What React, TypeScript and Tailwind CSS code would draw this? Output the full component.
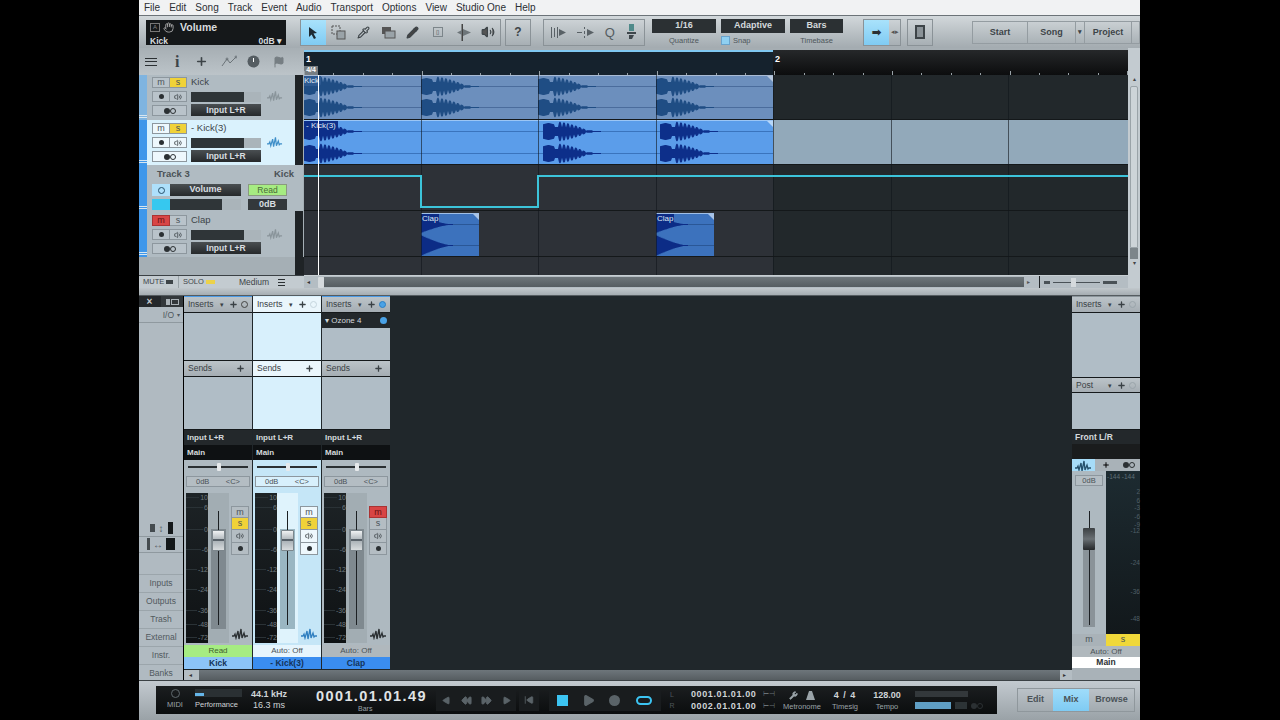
import React from "react";
import { Hand, Plus, Flag, Volume2, Wrench, Play, Rewind, FastForward, SkipBack, Pipette, Pencil } from "lucide-react";

// peaks for the kick hit: rounded attack, then a comb that dies away
const kickPath = (x0: number, cy: number, amp: number) => {
  const top: string[] = [];
  const bottom: string[] = [];
  for (let i = 0; i <= 58; i++) {
    let a = amp;
    if (i < 12) a = amp * (0.72 + 0.12 * Math.sin((i / 11) * Math.PI));
    else if (i < 15) a = amp * 0.45;
    else if (i < 46) {
      const env = Math.max(0.12, 1 - Math.pow((i - 15) / 32, 1.6));
      a = amp * env * [0.45, 0.9, 1, 0.9][(i - 15) % 4];
    } else a = i < 50 ? 1.2 : 0.5;
    top.push(`${x0 + i},${cy - a}`);
    bottom.unshift(`${x0 + i},${cy + a}`);
  }
  return "M" + top.join(" L") + " L" + bottom.join(" L") + "Z";
};

const clapPath = (cy: number, amp: number) => {
  const top: string[] = [];
  const bottom: string[] = [];
  for (let i = 0; i <= 32; i++) {
    const a = Math.max(0.5, amp * Math.pow(1 - i / 32, 1.5)) * (i % 2 ? 0.88 : 1);
    top.push(`${i},${cy - a}`);
    bottom.unshift(`${i},${cy + a}`);
  }
  return "M" + top.join(" L") + " L" + bottom.join(" L") + "Z";
};

const WaveIcon = ({ color = "#6f7a80" }: { color?: string }) => (
  <svg width="17" height="13" viewBox="0 0 17 13" fill="none" stroke={color} strokeWidth="1.3">
    <path d="M0 9h2l1-2 1 4 2-7 1 8 2-10 1 9 2-5 1 4 1-1h2" />
  </svg>
);

const SmallBtn = ({ children, className = "" }: { children?: React.ReactNode; className?: string }) => (
  <div className={`flex items-center justify-center border border-[#8d979e] text-[9px] leading-none text-[#4a5257] ${className}`}>
    {children}
  </div>
);

const Dot = () => <div className="h-[5px] w-[5px] rounded-full bg-[#2b3033]" />;

const Toggle = () => (
  <div className="flex items-center">
    <div className="h-[6px] w-[6px] rounded-full bg-[#2b3033]" />
    <div className="h-[6px] w-[6px] rounded-full border border-[#2b3033]" />
  </div>
);

const Tri = () => <span className="mx-[2px] text-[7px] leading-none">▾</span>;

const TrackRow = ({ name, selected, mute, rowClass, stripClass, padClass }: {
  name: string; selected?: boolean; mute?: boolean; rowClass: string; stripClass: string; padClass: string;
}) => {
  const btn = selected ? "bg-[#eef8fd]" : "bg-[#b9c3ca]";
  return (
    <div className={`flex ${rowClass}`}>
      <div className={`flex w-[8px] items-end ${stripClass}`}>
        <span className="mb-[2px] h-[3px] w-full border-y border-[#d8e6f0]" />
      </div>
      <div className={`flex w-[148px] gap-[4px] pl-[5px] ${padClass} ${selected ? "bg-[#daf2fd]" : "bg-[#b0bbc2]"}`}>
        <div className="flex w-[35px] flex-col gap-[3px]">
          <div className="flex h-[11px]">
            <SmallBtn className={`w-[18px] ${mute ? "border-[#a33] bg-[#d84545] text-[#611]" : btn}`}>m</SmallBtn>
            <SmallBtn className={`w-[17px] border-l-0 ${selected || name === "Kick" ? "bg-[#f0d238]" : btn}`}>s</SmallBtn>
          </div>
          <div className="flex h-[11px]">
            <SmallBtn className={`w-[18px] ${btn}`}><Dot /></SmallBtn>
            <SmallBtn className={`w-[17px] border-l-0 ${btn}`}><Volume2 size={8} strokeWidth={2.5} /></SmallBtn>
          </div>
          <SmallBtn className={`h-[11px] w-[35px] ${btn}`}><Toggle /></SmallBtn>
        </div>
        <div className="flex w-[70px] flex-col">
          <div className="h-[15px] text-[9.5px] leading-[9px] text-[#3d4448]">{name}</div>
          <div className="flex h-[10px]">
            <div className="w-[53px] bg-[#2f3538]" />
            <div className="w-[17px] bg-[#aab4ba]" />
          </div>
          <div className="mt-[2px] flex h-[12px] items-center justify-center bg-linear-to-b from-[#4a4f52] to-[#26292b] text-[8.5px] font-bold text-[#d9dee1]">
            Input L+R
          </div>
        </div>
        <div className="flex w-[18px] items-center pb-[6px] pl-[2px]">
          <WaveIcon color={selected ? "#3f8fc9" : "#8a959b"} />
        </div>
      </div>
      <div className="w-[8px] bg-[#1f2326]" />
    </div>
  );
};

const AutomationRow = () => (
  <div className="flex h-[46px]">
    <div className="flex w-[8px] items-end bg-[#3f97ea]">
      <span className="mb-[2px] h-[3px] w-full border-y border-[#d8e6f0]" />
    </div>
    <div className="flex w-[156px] flex-col bg-[#b0bbc2] pl-[5px] pr-[9px] pt-[3px]">
      <div className="flex h-[13px] items-center justify-between pl-[5px] text-[9.5px] font-bold text-[#4a5257]">
        <span>Track 3</span>
        <span>Kick</span>
      </div>
      <div className="mt-[3px] flex h-[12px]">
        <div className="flex w-[18px] items-center justify-center bg-[#aee0fb] text-[8px]">
          <div className="h-[7px] w-[7px] rounded-full border border-[#25506b]" />
        </div>
        <div className="flex w-[71px] items-center justify-center bg-linear-to-b from-[#4a4f52] to-[#26292b] text-[9px] font-bold text-[#d9dee1]">Volume</div>
        <div className="ml-[7px] flex w-[39px] items-center justify-center border border-[#8a9a80] bg-[#a6ec82] text-[8.5px] text-[#4a6b38]">Read</div>
      </div>
      <div className="mt-[3px] flex h-[11px]">
        <div className="w-[18px] bg-[#36c8ef]" />
        <div className="w-[52px] bg-[#2f3538]" />
        <div className="w-[19px] bg-[#aab4ba]" />
        <div className="ml-[7px] flex w-[39px] items-center justify-center bg-[#33383b] text-[9px] font-bold text-[#d9dee1]">0dB</div>
      </div>
    </div>
  </div>
);

const RULER_TICKS = Array.from({ length: 29 }, (_, i) => i * 29.4);
const GRID = [117, 234, 352, 469, 587, 704];

const Corner = ({ fill }: { fill: string }) => (
  <svg className="absolute right-0 top-0" width="6" height="6" fill={fill}><path d="M0 0h6v6z" /></svg>
);

const Timeline = () => (
  <div className="relative h-[200px] w-[824px] overflow-hidden bg-[#22282b]">
    {/* kick */}
    <div className="flex h-[45px] border-b border-[#14181a]">
      <div className="relative h-[44px] w-[469px] border-t border-[#a9bbd4] bg-[#6c8fbd]">
        <div className="absolute left-0 top-[10px] h-px w-full bg-[#4a6c9c]" />
        <div className="absolute left-0 top-[31px] h-px w-full bg-[#4a6c9c]" />
        <svg className="absolute left-0 top-0" width="469" height="44" fill="#1f4d84">
          {[0, 117, 234, 352].map((x) => (
            <g key={x}>
              <path d={kickPath(x, 10.5, 10)} />
              <path d={kickPath(x, 31.5, 10)} />
            </g>
          ))}
        </svg>
        <Corner fill="#b6c8de" />
        <div className="absolute left-0 top-0 rounded-br-[3px] bg-[#2e5a92] pr-[2px] text-[8px] leading-[10px] text-[#dfe8f2]">Kick</div>
      </div>
    </div>
    {/* kick(3), selected */}
    <div className="flex h-[45px] border-b border-[#14181a]">
      <div className="relative h-[44px] w-[469px] border-t border-[#9cc6f5] bg-[#5b9dea]">
        <div className="absolute left-0 top-[10px] h-px w-full bg-[#3a74bd]" />
        <div className="absolute left-0 top-[32px] h-px w-full bg-[#3a74bd]" />
        <svg className="absolute left-0 top-0" width="469" height="44" fill="#0d2f8a">
          {[0, 239, 356].map((x) => (
            <g key={x}>
              <path d={kickPath(x, 10.5, 10)} />
              <path d={kickPath(x, 32.5, 10)} />
            </g>
          ))}
        </svg>
        <Corner fill="#b8d8fa" />
        <div className="absolute left-0 top-0 rounded-br-[3px] bg-[#0d2f8a] px-[2px] text-[8px] leading-[10px] text-[#dfe8f2]">- Kick(3)</div>
      </div>
      <div className="h-[44px] flex-1 bg-[#92a9ba]" />
    </div>
    {/* automation */}
    <div className="flex h-[46px] border-b border-[#14181a]">
      <div className="h-[45px] w-[469px] bg-[#2d3137]" />
      <div className="h-[45px] flex-1 bg-[#22282b]" />
    </div>
    {/* clap */}
    <div className="relative flex h-[46px] border-b border-[#14181a]">
      <div className="h-[45px] w-[469px] bg-[#2d3137]" />
      <div className="h-[45px] flex-1 bg-[#22282b]" />
      {[117, 352].map((x) => (
        <div key={x} className={`absolute top-[2px] h-[43px] w-[58px] border-t border-[#a0c0e8] bg-[#3c72bd] ${x === 117 ? "left-[117px]" : "left-[352px]"}`}>
          <div className="absolute left-0 top-[10px] h-px w-full bg-[#2a5797]" />
          <div className="absolute left-0 top-[31px] h-px w-full bg-[#2a5797]" />
          <svg className="absolute left-0 top-0" width="58" height="43" fill="#0c2c86">
            <path d={clapPath(10.5, 9)} />
            <path d={clapPath(31.5, 11)} />
          </svg>
          <Corner fill="#a9c4e8" />
          <div className="absolute left-0 top-0 rounded-br-[3px] bg-[#0c2c86] px-[1px] text-[8px] leading-[10px] text-[#dfe8f2]">Clap</div>
        </div>
      ))}
    </div>
    <div className="flex h-[18px]">
      <div className="w-[469px] bg-[#2d3137]" />
      <div className="flex-1 bg-[#22282b]" />
    </div>
    {/* grid lines and playhead sit over the lanes */}
    {GRID.map((x) => (
      <div key={x} className="absolute top-0 h-full w-px bg-[#11161a] opacity-60" style={{ left: x }} />
    ))}
    <svg className="absolute left-0 top-0" width="824" height="200" fill="none" stroke="#3cc4da" strokeWidth="2">
      <path d="M0 101H117V132H234V101H824" />
    </svg>
    <div className="absolute left-[14px] top-0 h-full w-px bg-white" />
  </div>
);

const Ruler = () => (
  <div className="relative h-[27px] w-[824px] bg-[#a5adb2] pt-[2px]">
    <div className="flex h-[25px]">
      <div className="h-full w-[469px] border-t-2 border-[#7fc8f2] bg-[#15222d]" />
      <div className="h-full flex-1 bg-linear-to-b from-[#26282a] to-[#0c0d0e]" />
    </div>
    <span className="absolute left-[2px] top-[5px] text-[9px] font-bold text-white">1</span>
    <span className="absolute left-[471px] top-[5px] text-[9px] font-bold text-white">2</span>
    <span className="absolute bottom-0 left-0 flex h-[9px] w-[14px] items-center justify-center bg-[#777e83] text-[7px] font-bold text-white">4/4</span>
    {RULER_TICKS.map((x, i) => (
      <div key={i} className="absolute bottom-0 w-px bg-[#9aa3a8]" style={{ left: x, height: i % 4 === 0 ? 4 : 2 }} />
    ))}
  </div>
);

const Meter = () => {
  const marks = ["10", "6", "0", "-6", "-12", "-24", "-36", "-48", "-72"];
  const pos = ["top-0", "top-[10px]", "top-[32px]", "top-[52px]", "top-[72px]", "top-[92px]", "top-[113px]", "top-[127px]", "top-[140px]"];
  return (
    <div className="relative h-[150px] w-[22px] bg-linear-to-b from-[#1d2326] to-[#0f1214]">
      {marks.map((m, i) => (
        <span key={m} className={`absolute right-0 flex w-full items-center justify-end text-[7px] leading-[9px] text-[#6e797f] ${pos[i]}`}>
          <span className="mr-[1px] h-px flex-1 bg-[#2a3236]" />
          {m}
        </span>
      ))}
    </div>
  );
};

const FaderCap = () => (
  <div className="absolute left-[4px] top-[37px] h-[21px] w-[13px] rounded-[1px] border border-[#7c868c] bg-linear-to-b from-[#f0f2f3] via-[#a9b1b6] to-[#d8dcde]">
    <div className="mt-[8px] h-[2px] w-full bg-[#59626a]" />
  </div>
);

const Channel = ({ name, selected, mute, solo, mode, ozone }: {
  name: string; selected?: boolean; mute?: boolean; solo?: boolean; mode: string; ozone?: boolean;
}) => {
  const area = selected ? "bg-[#d8f0fc]" : "bg-[#b0bdc6]";
  const head = selected ? "bg-[#eaf6fc]" : "bg-linear-to-b from-[#bcc4c9] to-[#a5adb3]";
  const small = selected ? "bg-[#eef8fd]" : "bg-[#b4bdc3]";
  return (
    <div className="flex w-[68px] flex-col">
      <div className={`h-px ${selected ? "bg-[#d8f0fc]" : "bg-[#4c9be6]"}`} />
      <div className={`flex h-[15px] items-center gap-[3px] pl-[4px] text-[8.5px] text-[#3a4145] ${head}`}>
        <span className="w-[27px]">Inserts</span>
        <Tri />
        <Plus size={9} strokeWidth={3.5} />
        <div className={`h-[7px] w-[7px] rounded-full border ${ozone ? "border-[#2a7fc4] bg-[#4aa2e6]" : selected ? "border-[#c5d5dd]" : "border-[#444]"}`} />
      </div>
      <div className="h-px bg-[#15191b]" />
      <div className={`h-[47px] ${area}`}>
        {ozone && (
          <div className="flex h-[15px] items-center justify-between bg-[#23282b] pl-[3px] pr-[3px] text-[8px] text-[#d5dadd]">
            <span>▾ Ozone 4</span>
            <div className="h-[7px] w-[7px] rounded-full bg-[#4aa2e6]" />
          </div>
        )}
      </div>
      <div className="h-px bg-[#15191b]" />
      <div className={`flex h-[15px] items-center justify-between pl-[4px] pr-[7px] text-[8.5px] text-[#3a4145] ${head}`}>
        <span>Sends</span>
        <Plus size={9} strokeWidth={3.5} />
      </div>
      <div className="h-px bg-[#15191b]" />
      <div className={`h-[52px] ${area}`} />
      <div className="h-px bg-[#15191b]" />
      <div className="flex h-[15px] items-center bg-[#23282b] pl-[3px] text-[8px] font-bold text-[#d5dadd]">Input L+R</div>
      <div className="flex h-[15px] items-center bg-[#0e1113] pl-[3px] text-[8px] font-bold text-[#d5dadd]">Main</div>
      <div className={`flex h-[185px] flex-col px-[2px] ${selected ? "bg-[#c5e6f7]" : "bg-[#aeb9c0]"}`}>
        <div className="relative mx-[2px] mt-[6px] h-[2px] bg-[#2a2f32]">
          <div className="absolute left-[29px] top-[-3px] h-[8px] w-[4px] rounded-[1px] bg-[#e6e9eb]" />
        </div>
        <div className={`mt-[8px] flex h-[11px] items-center justify-between border border-[#8d979e] px-[9px] text-[7.5px] text-[#4a5257] ${selected ? "bg-[#d8f0fc]" : "bg-[#b4bdc3]"}`}>
          <span>0dB</span><span>&lt;C&gt;</span>
        </div>
        <div className="mt-[6px] flex h-[150px]">
          <Meter />
          <div className={`relative h-[150px] w-[21px] ${selected ? "bg-[#dff3fc]" : "bg-[#a2adb3]"}`}>
            <div className={`absolute left-[3px] top-[36px] h-[100px] w-[15px] ${selected ? "bg-[#9ab6c2]" : "bg-[#7f898f]"}`} />
            <div className="absolute left-[10px] top-[18px] h-[114px] w-px bg-[#1c2023]" />
            <FaderCap />
          </div>
          <div className="ml-[2px] flex w-[18px] flex-col">
            <SmallBtn className={`mt-[13px] h-[12px] ${mute ? "border-[#a33] bg-[#d84545] text-[#611]" : small}`}>m</SmallBtn>
            <SmallBtn className={`h-[12px] border-t-0 ${solo ? "bg-[#f0d238]" : small}`}>s</SmallBtn>
            <SmallBtn className={`h-[13px] border-t-0 ${small}`}><Volume2 size={8} strokeWidth={2.5} /></SmallBtn>
            <SmallBtn className={`h-[12px] border-t-0 ${small}`}><Dot /></SmallBtn>
            <div className="mt-auto mb-[3px] flex justify-center"><WaveIcon color={selected ? "#2f7fc0" : "#2b3033"} /></div>
          </div>
        </div>
      </div>
      <div className={`flex h-[12px] items-center justify-center text-[8px] ${mode === "Read" ? "bg-[#a6ec82] text-[#41612e]" : selected ? "bg-[#e6f5fd] text-[#4a5257]" : "bg-[#b0b8bd] text-[#4a5257]"}`}>{mode}</div>
      <div className={`flex h-[12px] items-center justify-center text-[8.5px] font-bold text-[#14345a] ${name === "Kick" ? "bg-[#8cc4f7]" : "bg-[#3a8df0]"}`}>{name}</div>
    </div>
  );
};

const MainChannel = () => (
  <div className="flex w-[68px] flex-col">
    <div className="h-px bg-[#8b959b]" />
    <div className="flex h-[15px] items-center gap-[3px] bg-linear-to-b from-[#bcc4c9] to-[#a5adb3] pl-[4px] text-[8.5px] text-[#3a4145]">
      <span className="w-[27px]">Inserts</span>
      <Tri />
      <Plus size={9} strokeWidth={3.5} />
      <div className="h-[7px] w-[7px] rounded-full border border-[#9aa4aa]" />
    </div>
    <div className="h-[65px] border-t border-[#15191b] bg-[#b0bdc6]" />
    <div className="flex h-[15px] items-center gap-[3px] border-t border-[#15191b] bg-linear-to-b from-[#bcc4c9] to-[#a5adb3] pl-[4px] text-[8.5px] text-[#3a4145]">
      <span className="w-[27px]">Post</span>
      <Tri />
      <Plus size={9} strokeWidth={3.5} />
      <div className="h-[7px] w-[7px] rounded-full border border-[#9aa4aa]" />
    </div>
    <div className="h-[37px] border-t border-[#15191b] bg-[#b0bdc6]" />
    <div className="flex h-[15px] items-center border-t border-[#15191b] bg-[#23282b] pl-[3px] text-[8.5px] font-bold text-[#d5dadd]">Front L/R</div>
    <div className="h-[15px] bg-[#1a1c1d]" />
    <div className="flex h-[12px] items-center">
      <div className="flex h-full w-[23px] items-center justify-center bg-[#a6dcf8]"><WaveIcon color="#25506b" /></div>
      <div className="flex h-full w-[22px] items-center justify-center bg-[#a9b2b8]"><Plus size={8} strokeWidth={3} /></div>
      <div className="flex h-full w-[23px] items-center justify-center bg-[#a9b2b8]"><Toggle /></div>
    </div>
    <div className="flex h-[163px]">
      <div className="relative h-full w-[34px] bg-[#aeb9c0]">
        <div className="mx-[3px] mt-[4px] flex h-[11px] items-center justify-center border border-[#8d979e] bg-[#b4bdc3] text-[7.5px] text-[#4a5257]">0dB</div>
        <div className="absolute left-[11px] top-[58px] h-[98px] w-[12px] bg-[#8a9399]" />
        <div className="absolute left-[17px] top-[40px] h-[114px] w-px bg-[#1c2023]" />
        <div className="absolute left-[11px] top-[57px] h-[22px] w-[12px] rounded-[1px] bg-linear-to-b from-[#3c4043] via-[#6a7074] to-[#25282a]" />
      </div>
      <div className="relative h-full w-[34px] bg-linear-to-b from-[#1d2b31] to-[#12181b]">
        <div className="pl-[1px] pt-[2px] text-[6.5px] leading-[8px] text-[#5f7078]">-144 -144</div>
        {[["2", "top-[17px]"], ["6", "top-[26px]"], ["-3", "top-[33px]"], ["-6", "top-[42px]"], ["-9", "top-[50px]"], ["-12", "top-[56px]"], ["-24", "top-[88px]"], ["-36", "top-[117px]"], ["-48", "top-[144px]"]].map(([m, t]) => (
          <span key={m} className={`absolute right-0 text-[6.5px] leading-[8px] text-[#4f5f66] ${t}`}>{m}</span>
        ))}
      </div>
    </div>
    <div className="flex h-[12px]">
      <div className="flex w-[34px] items-center justify-center bg-[#a9b2b8] text-[9px] text-[#4a5257]">m</div>
      <div className="flex w-[34px] items-center justify-center bg-[#f0d83a] text-[9px] text-[#4a5257]">s</div>
    </div>
    <div className="flex h-[11px] items-center justify-center bg-[#b0b8bd] text-[8px] text-[#4a5257]">Auto: Off</div>
    <div className="flex h-[11px] items-center justify-center bg-white text-[8.5px] font-bold text-[#2b3033]">Main</div>
    <div className="flex-1 bg-[#a9b2b8]" />
  </div>
);

const ConsoleSide = () => (
  <div className="flex w-[44px] flex-col bg-[#b0bac1] text-[8.5px] text-[#50595e]">
    <div className="flex h-[11px] bg-[#24282b]">
      <div className="flex w-[21px] items-center justify-center text-[10px] font-bold text-[#c7ccd0]">×</div>
      <div className="ml-[1px] flex flex-1 items-center justify-center gap-[1px] bg-[#33383b]">
        <span className="h-[6px] w-[4px] bg-[#aab2b7]" />
        <span className="h-[6px] w-[8px] border border-[#aab2b7]" />
      </div>
    </div>
    <div className="flex h-[16px] items-center justify-end gap-[3px] border-b border-[#8f999f] pr-[3px] pt-[2px]">
      <span>I/O</span>
      <span className="text-[6px]">▾</span>
    </div>
    <div className="mt-[198px] flex h-[17px] items-center justify-center gap-[4px] border-b border-[#8f999f] text-[10px]">
      <div className="h-[8px] w-[5px] bg-[#444b4f]" />
      <span>↕</span>
      <div className="h-[12px] w-[5px] bg-[#14181a]" />
    </div>
    <div className="flex h-[19px] items-center justify-center gap-[3px] border-b border-[#8f999f] text-[10px]">
      <div className="h-[12px] w-[3px] bg-[#444b4f]" />
      <span>↔</span>
      <div className="h-[12px] w-[9px] bg-[#14181a]" />
    </div>
    <div className="mt-[21px] flex flex-col">
      {["Inputs", "Outputs", "Trash", "External", "Instr.", "Banks"].map((t) => (
        <div key={t} className="flex h-[18px] items-center justify-center border-t border-[#9ba5ab]">{t}</div>
      ))}
    </div>
  </div>
);

const TBtn = ({ children, className = "" }: { children?: React.ReactNode; className?: string }) => (
  <div className={`flex h-[22px] w-[20px] items-center justify-center bg-[#191c1e] text-[#5a6368] ${className}`}>{children}</div>
);

const ToolBtn = ({ children, active }: { children?: React.ReactNode; active?: boolean }) => (
  <div className={`flex h-[25px] w-[25px] items-center justify-center text-[#3d4448] ${active ? "bg-linear-to-b from-[#a9e2fb] to-[#7fcbf3]" : ""}`}>{children}</div>
);

export default function App() {
  return (
    <div className="h-[720px] w-[1280px] overflow-hidden bg-black pl-[139px] [font-family:'Liberation_Sans',sans-serif]">
      <div className="flex h-[720px] w-[1001px] flex-col">
        {/* menu */}
        <div className="flex h-[15px] items-center gap-[9px] bg-[#f1f2f3] pl-[5px] text-[10px] text-[#2b2f33]">
          {["File", "Edit", "Song", "Track", "Event", "Audio", "Transport", "Options", "View", "Studio One", "Help"].map((m) => (
            <span key={m}>{m}</span>
          ))}
        </div>

        {/* toolbar */}
        <div className="flex h-[33px] items-center border-t border-[#6c7378] bg-linear-to-b from-[#d2d8db] to-[#a3abb0] pl-[7px]">
          <div className="flex h-[25px] w-[140px] flex-col justify-between bg-[#15181a] px-[4px] py-[1px] text-white">
            <div className="flex h-[14px] items-center gap-[3px]">
              <div className="flex h-[9px] w-[10px] items-center justify-center border border-[#777] text-[6px] text-[#888]">A</div>
              <Hand size={11} className="text-[#aaa]" />
              <span className="ml-[3px] text-[10.5px] font-bold text-[#d8dcde]">Volume</span>
            </div>
            <div className="flex items-center justify-between text-[8.5px] font-bold text-[#d8dcde]">
              <span>Kick</span>
              <span>0dB ▾</span>
            </div>
          </div>
          <div className="ml-[14px] flex h-[27px] w-[201px] items-center border border-[#8a9297]">
            <ToolBtn active>
              <svg width="12" height="13" viewBox="0 0 12 13" fill="#1e2a32"><path d="M2 1l8 6-3.5.6L9 12l-2 1-2.4-4.6L2 11z" /></svg>
            </ToolBtn>
            <ToolBtn>
              <svg width="15" height="15" viewBox="0 0 15 15" fill="none" stroke="#555"><rect x="1" y="1" width="8" height="8" strokeDasharray="2 1" /><rect x="6" y="6" width="8" height="8" fill="#9aa3a8" /></svg>
            </ToolBtn>
            <ToolBtn><Pipette size={13} /></ToolBtn>
            <ToolBtn>
              <svg width="15" height="13" viewBox="0 0 15 13" fill="#555"><rect x="1" y="1" width="9" height="7" /><rect x="4" y="5" width="10" height="7" fill="#9aa3a8" stroke="#555" /></svg>
            </ToolBtn>
            <ToolBtn><Pencil size={13} fill="#444" /></ToolBtn>
            <ToolBtn>
              <div className="flex h-[10px] w-[10px] items-center justify-center border border-[#7c858a] text-[6px]">▯</div>
            </ToolBtn>
            <ToolBtn>
              <svg width="17" height="17" viewBox="0 0 17 17" fill="#6d7579"><rect x="7.5" y="0" width="1.5" height="17" fill="#444" /><path d="M9 5l8 3.500-8 3.500zM8 6L3 8.500l5 2.500z" /></svg>
            </ToolBtn>
            <ToolBtn><Volume2 size={14} fill="#555" /></ToolBtn>
          </div>
          <div className="ml-[4px] flex h-[27px] w-[26px] items-center justify-center border border-[#8a9297] text-[12px] font-bold text-[#3d4448]">?</div>
          <div className="ml-[12px] flex h-[27px] w-[102px] items-center justify-around border border-[#8a9297] px-[2px] text-[#555d62]">
            <svg width="15" height="11" viewBox="0 0 15 11" fill="#596166"><path d="M0 0h1v11H0zM3 1h1v9H3zM6 0h1v11H6zM8 2l7 3.500-7 3.500z" /></svg>
            <svg width="17" height="11" viewBox="0 0 17 11" fill="#596166"><path d="M0 5h5v1H0zM7 0h1v2H7zM7 4h1v3H7zM7 9h1v2H7zM10 2l7 3.500-7 3.500z" /></svg>
            <span className="text-[13px] leading-none">Q</span>
            <svg width="11" height="16" viewBox="0 0 11 16" fill="#3f474c"><rect x="3" y="0" width="5" height="7" fill="#4f8a8a" /><path d="M1 8h9v2H1zM3 11h5l-2 4H3z" /></svg>
          </div>
          <div className="ml-[7px] flex w-[200px] flex-col pt-[1px]">
            <div className="flex gap-[5px]">
              <div className="flex h-[14px] w-[64px] items-center justify-center bg-[#2b3033] text-[9px] font-bold text-[#d5dadd]">1/16</div>
              <div className="flex h-[14px] w-[64px] items-center justify-center bg-[#2b3033] text-[9px] font-bold text-[#d5dadd]">Adaptive</div>
              <div className="flex h-[14px] w-[53px] items-center justify-center bg-[#2b3033] text-[9px] font-bold text-[#d5dadd]">Bars</div>
            </div>
            <div className="mt-[2px] flex h-[11px] items-center gap-[5px] text-[7.5px] text-[#4e565b]">
              <span className="w-[64px] text-center">Quantize</span>
              <span className="flex w-[64px] items-center gap-[3px]">
                <span className="h-[9px] w-[9px] border border-[#6aa3cc] bg-[#8fd0f2]" />
                Snap
              </span>
              <span className="w-[53px] text-center">Timebase</span>
            </div>
          </div>
          <div className="ml-[11px] flex h-[27px] w-[38px] border border-[#8a9297]">
            <div className="flex w-[25px] items-center justify-center bg-linear-to-b from-[#a9e2fb] to-[#7fcbf3] text-[11px] font-bold leading-none text-[#2b3033]">➡</div>
            <div className="flex flex-1 items-center justify-center text-[7px] text-[#555]">◂▸</div>
          </div>
          <div className="ml-[6px] flex h-[27px] w-[26px] items-center justify-center border border-[#8a9297]">
            <div className="h-[14px] w-[10px] border-2 border-[#3d4448] bg-[#8a9297]" />
          </div>
          <div className="ml-[39px] mt-[1px] flex h-[23px] w-[168px] border border-[#949ca1] text-[9px] font-bold text-[#3d4448]">
            <div className="flex w-[55px] items-center justify-center border-r border-[#949ca1]">Start</div>
            <div className="flex w-[47px] items-center justify-center">Song</div>
            <div className="flex w-[10px] items-center justify-center border-x border-[#949ca1] text-[7px]">▾</div>
            <div className="flex w-[47px] items-center justify-center border-r border-[#949ca1]">Project</div>
          </div>
        </div>

        {/* arrange view */}
        <div className="flex h-[240px]">
          <div className="flex w-[165px] flex-col bg-[#a5afb5]">
            <div className="flex h-[27px] items-center bg-linear-to-b from-[#a7afb4] to-[#bcc4c9] pl-[6px] text-[#3d4448]">
              <div className="flex h-[8px] w-[12px] flex-col justify-between">
                <span className="h-px bg-[#2b3033]" /><span className="h-px bg-[#2b3033]" /><span className="h-px bg-[#2b3033]" />
              </div>
              <span className="ml-[18px] w-[8px] text-[16px] font-bold leading-none [font-family:'Liberation_Serif',serif]">i</span>
              <Plus size={13} strokeWidth={3} className="ml-[12px]" />
              <svg className="ml-[13px]" width="16" height="13" viewBox="0 0 16 13" fill="none" stroke="#6b7378"><path d="M1 11L6 4l3 4 6-6" /><circle cx="6" cy="4" r="1" /><circle cx="15" cy="2" r="1" /></svg>
              <svg className="ml-[10px]" width="13" height="13" viewBox="0 0 13 13" fill="#555d62"><circle cx="6.500" cy="6.500" r="6" /><path d="M6 3h1v4H6z" fill="#fff" /></svg>
              <Flag size={12} fill="#767e83" stroke="#767e83" className="ml-[13px]" />
            </div>
            <TrackRow name="Kick" rowClass="h-[45px]" stripClass="bg-[#7fb4e0]" padClass="pt-[2px]" />
            <TrackRow name="- Kick(3)" selected rowClass="h-[45px]" stripClass="bg-[#3f97ea]" padClass="pt-[3px]" />
            <AutomationRow />
            <TrackRow name="Clap" mute rowClass="h-[46px]" stripClass="bg-[#3f97ea]" padClass="pt-[4px]" />
            <div className="flex h-[18px]">
              <div className="w-[156px] bg-[#a5afb5]" />
              <div className="w-[9px] bg-[#1f2326]" />
            </div>
            <div className="flex h-[13px] items-center border-t border-[#3b4145] bg-[#c3cbd0] text-[7.5px] text-[#3d4448]">
              <span className="flex w-[39px] items-center gap-[2px] pl-[4px]">MUTE<span className="h-[4px] w-[7px] bg-[#3d4448]" /></span>
              <span className="flex w-[40px] items-center gap-[2px] border-l border-[#9aa3a8] pl-[4px]">SOLO<span className="h-[4px] w-[9px] bg-[#ecd24a]" /></span>
              <span className="ml-[18px] w-[36px] text-center text-[8.5px]">Medium</span>
              <span className="ml-[6px] flex h-[7px] w-[7px] flex-col justify-between">
                <span className="h-px bg-[#2b3033]" /><span className="h-px bg-[#2b3033]" /><span className="h-px bg-[#2b3033]" />
              </span>
            </div>
          </div>
          <div className="flex w-[824px] flex-col">
            <Ruler />
            <Timeline />
            <div className="flex h-[13px] items-center border-t border-[#c7ced2] bg-[#b4bdc3]">
              <span className="w-[14px] pl-[3px] text-[6px] text-[#333]">◂</span>
              <div className="h-[11px] w-[6px] rounded-[1px] bg-[#d5dadd]" />
              <div className="h-[10px] w-[700px] bg-linear-to-b from-[#6e767b] to-[#565d61]" />
              <span className="ml-[3px] w-[12px] text-[6px] text-[#555]">▸</span>
              <div className="flex h-full flex-1 items-center gap-[2px] border-l border-[#1f2326] pl-[4px]">
                <span className="h-[3px] w-[6px] bg-[#4a5257]" />
                <div className="relative mx-[1px] h-px w-[47px] bg-[#4a5257]">
                  <div className="absolute left-[18px] top-[-4px] h-[9px] w-[5px] bg-[#d5dadd]" />
                </div>
                <span className="h-[3px] w-[14px] bg-[#4a5257]" />
              </div>
            </div>
          </div>
          <div className="flex w-[12px] flex-col bg-[#c3cbd0] pt-[27px]">
            <div className="h-[11px] text-center text-[6px] text-[#444]">▴</div>
            <div className="mx-[2px] h-[162px] rounded-t-[2px] border border-[#9aa3a8] bg-[#cdd4d8]" />
            <div className="mx-[2px] h-[11px] bg-[#7c858a]" />
            <div className="h-[9px] text-center text-[6px] text-[#444]">▾</div>
          </div>
        </div>

        {/* divider */}
        <div className="h-[8px] border-b border-[#555c60] bg-linear-to-b from-[#c1c8cc] to-[#a5adb2]" />

        {/* console */}
        <div className="flex h-[384px]">
          <ConsoleSide />
          <div className="ml-px flex w-[888px] flex-col bg-[#20272b]">
            <div className="flex h-[374px] gap-px">
              <Channel name="Kick" mode="Read" solo />
              <Channel name="- Kick(3)" mode="Auto: Off" solo selected />
              <Channel name="Clap" mode="Auto: Off" mute ozone />
            </div>
            <div className="flex h-[10px] items-center bg-[#b4bdc3]">
              <span className="w-[15px] pl-[5px] text-[6px] text-[#333]">◂</span>
              <div className="h-full flex-1 bg-linear-to-b from-[#6e767b] to-[#565d61]" />
              <span className="w-[12px] pl-[3px] text-[6px] text-[#333]">▸</span>
            </div>
          </div>
          <MainChannel />
        </div>

        {/* transport */}
        <div className="flex h-[40px] items-start border-t border-[#3b4145] bg-linear-to-b from-[#c3cad0] to-[#9aa2a7] pl-[17px] pt-[5px]">
          <div className="flex h-[28px] w-[841px] items-center bg-linear-to-b from-[#1b1e20] to-[#0b0d0e] text-[#cfd4d7]">
            <div className="flex w-[38px] flex-col items-center text-[7.5px] text-[#9aa3a8]">
              <div className="mb-[1px] h-[9px] w-[9px] rounded-full border border-[#5f686d]" />
              MIDI
            </div>
            <div className="flex w-[52px] flex-col pl-[1px]">
              <div className="h-[8px] w-[47px] bg-[#2a3033]">
                <div className="mt-[4px] h-[3px] w-[9px] bg-[#65b5e8]" />
              </div>
              <span className="mt-[2px] text-[7.5px]">Performance</span>
            </div>
            <div className="flex w-[46px] flex-col items-center text-[9px] font-bold leading-[11px]">
              <span>44.1 kHz</span>
              <span className="font-normal">16.3 ms</span>
            </div>
            <div className="ml-[24px] flex w-[120px] flex-col">
              <span className="whitespace-nowrap text-[14.5px] font-bold leading-[17px] tracking-[1.4px] text-[#e0e4e6]">0001.01.01.49</span>
              <span className="pl-[42px] text-[7px] leading-[8px] text-[#9aa3a8]">Bars</span>
            </div>
            <TBtn><Play size={9} fill="#5a6368" className="rotate-180" /></TBtn>
            <TBtn><Rewind size={11} fill="#5a6368" /></TBtn>
            <TBtn><FastForward size={11} fill="#5a6368" /></TBtn>
            <TBtn><Play size={9} fill="#5a6368" /></TBtn>
            <TBtn className="ml-[3px]"><SkipBack size={10} fill="#5a6368" /></TBtn>
            <TBtn className="ml-[10px] w-[26px]"><div className="h-[11px] w-[11px] bg-[#3cc4f2]" /></TBtn>
            <TBtn className="w-[26px]"><Play size={13} fill="#5a6368" /></TBtn>
            <TBtn className="w-[26px]"><div className="h-[11px] w-[11px] rounded-full bg-[#5a6368]" /></TBtn>
            <TBtn className="w-[34px]">
              <div className="h-[9px] w-[16px] rounded-full border-2 border-[#3cc4f2]" />
            </TBtn>
            <div className="ml-[5px] flex w-[12px] flex-col text-center text-[7px] leading-[11px] text-[#4e565b]">
              <span>L</span><span>R</span>
            </div>
            <div className="ml-[13px] flex w-[72px] flex-col whitespace-nowrap text-[9px] font-bold leading-[12px] tracking-[0.6px]">
              <span>0001.01.01.00</span>
              <span>0002.01.01.00</span>
            </div>
            <div className="flex w-[14px] flex-col text-[7px] leading-[12px] text-[#6a7378]">
              <span>⊢⊣</span><span>⊢⊣</span>
            </div>
            <div className="ml-[2px] flex w-[46px] flex-col items-center">
              <div className="flex h-[13px] items-center gap-[8px] text-[#9aa3a8]">
                <Wrench size={9} fill="#9aa3a8" />
                <svg width="9" height="9" viewBox="0 0 9 9" fill="#9aa3a8"><path d="M3 0h3l3 9H0z" /></svg>
              </div>
              <span className="text-[7.5px] leading-[10px] text-[#9aa3a8]">Metronome</span>
            </div>
            <div className="ml-[3px] flex w-[34px] flex-col items-center">
              <span className="text-[9px] font-bold leading-[13px] tracking-[1px]">4 / 4</span>
              <span className="text-[7.5px] leading-[10px] text-[#9aa3a8]">Timesig</span>
            </div>
            <div className="ml-[5px] flex w-[40px] flex-col items-center">
              <span className="text-[9px] font-bold leading-[13px]">128.00</span>
              <span className="text-[7.5px] leading-[10px] text-[#9aa3a8]">Tempo</span>
            </div>
            <div className="ml-[8px] flex w-[68px] flex-col gap-[5px]">
              <div className="h-[6px] w-[53px] bg-[#33383b]" />
              <div className="flex items-center gap-[4px]">
                <div className="h-[7px] w-[40px] bg-[#5f9ec4]" />
                <div className="h-[7px] w-[13px] bg-[#2c3336]" />
                <Toggle />
              </div>
            </div>
          </div>
          <div className="ml-[20px] mt-[2px] flex h-[24px] w-[118px] border border-[#8f979c] text-[9px] text-[#4a5257]">
            <div className="flex w-[35px] items-center justify-center font-bold">Edit</div>
            <div className="flex w-[36px] items-center justify-center bg-linear-to-b from-[#9fdcfa] to-[#7fcbf3] font-bold">Mix</div>
            <div className="flex flex-1 items-center justify-center font-bold">Browse</div>
          </div>
        </div>
      </div>
    </div>
  );
}
